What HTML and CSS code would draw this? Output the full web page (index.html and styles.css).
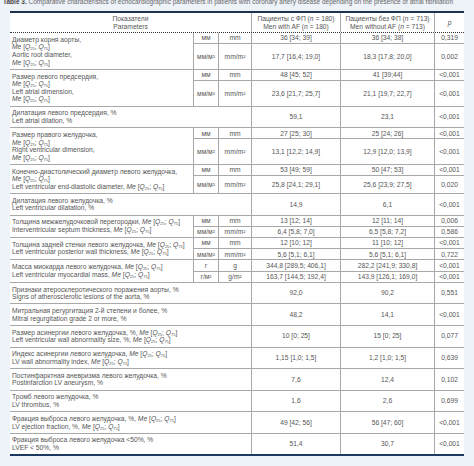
FILE: index.html
```html
<!DOCTYPE html>
<html lang="ru">
<head>
<meta charset="utf-8">
<title>Table 3</title>
<link rel="stylesheet" href="styles.css">
</head>
<body>
<div class="caption"><b>Table 3.</b> Comparative characteristics of echocardiographic parameters in patients with coronary artery disease depending on the presence of atrial fibrillation</div>
<div class="table">
  <div class="head">
    <div class="hp">Показатели<br>Parameters</div>
    <div class="c v1"><span>Пациенты с ФП (<i>n</i> = 180)<br>Men with AF (<i>n</i> = 180)</span></div>
    <div class="c v2"><span>Пациенты без ФП (<i>n</i> = 713)<br>Men without AF (<i>n</i> = 713)</span></div>
    <div class="c p"><i>p</i></div>
  </div>

  <div class="row">
    <div class="param">Диаметр корня аорты,<br><i>Me</i> [<i>Q</i><sub>25</sub>; <i>Q</i><sub>75</sub>]<br>Aortic root diameter,<br><i>Me</i> [<i>Q</i><sub>25</sub>; <i>Q</i><sub>75</sub>]</div>
    <div class="subs">
      <div class="sub"><div class="c u1">мм</div><div class="c u2">mm</div><div class="c v1">36 [34; 39]</div><div class="c v2">36 [34; 38]</div><div class="c p">0,319</div></div>
      <div class="sub"><div class="c u1">мм/м²</div><div class="c u2">mm/m²</div><div class="c v1">17,7 [16,4; 19,0]</div><div class="c v2">18,3 [17,8; 20,0]</div><div class="c p">0,002</div></div>
    </div>
  </div>

  <div class="row">
    <div class="param">Размер левого предсердия,<br><i>Me</i> [<i>Q</i><sub>25</sub>; <i>Q</i><sub>75</sub>]<br>Left atrial dimension,<br><i>Me</i> [<i>Q</i><sub>25</sub>; <i>Q</i><sub>75</sub>]</div>
    <div class="subs">
      <div class="sub"><div class="c u1">мм</div><div class="c u2">mm</div><div class="c v1">48 [45; 52]</div><div class="c v2">41 [39;44]</div><div class="c p">&lt;0,001</div></div>
      <div class="sub"><div class="c u1">мм/м²</div><div class="c u2">mm/m²</div><div class="c v1">23,6 [21,7; 25,7]</div><div class="c v2">21,1 [19,7; 22,7]</div><div class="c p">&lt;0,001</div></div>
    </div>
  </div>

  <div class="row">
    <div class="param wide">Дилатация левого предсердия, %<br>Left atrial dilation, %</div>
    <div class="c v1">59,1</div><div class="c v2">23,1</div><div class="c p">&lt;0,001</div>
  </div>

  <div class="row">
    <div class="param">Размер правого желудочка,<br><i>Me</i> [<i>Q</i><sub>25</sub>; <i>Q</i><sub>75</sub>]<br>Right ventricular dimension,<br><i>Me</i> [<i>Q</i><sub>25</sub>; <i>Q</i><sub>75</sub>]</div>
    <div class="subs">
      <div class="sub"><div class="c u1">мм</div><div class="c u2">mm</div><div class="c v1">27 [25; 30]</div><div class="c v2">25 [24; 26]</div><div class="c p">&lt;0,001</div></div>
      <div class="sub"><div class="c u1">мм/м²</div><div class="c u2">mm/m²</div><div class="c v1">13,1 [12,2; 14,9]</div><div class="c v2">12,9 [12,0; 13,9]</div><div class="c p">&lt;0,001</div></div>
    </div>
  </div>

  <div class="row">
    <div class="param">Конечно-диастолический диаметр левого желудочка,<br><i>Me</i> [<i>Q</i><sub>25</sub>; <i>Q</i><sub>75</sub>]<br>Left ventricular end-diastolic diameter, <i>Me</i> [<i>Q</i><sub>25</sub>; <i>Q</i><sub>75</sub>]</div>
    <div class="subs">
      <div class="sub"><div class="c u1">мм</div><div class="c u2">mm</div><div class="c v1">53 [49; 59]</div><div class="c v2">50 [47; 53]</div><div class="c p">&lt;0,001</div></div>
      <div class="sub"><div class="c u1">мм/м²</div><div class="c u2">mm/m²</div><div class="c v1">25,8 [24,1; 29,1]</div><div class="c v2">25,6 [23,9; 27,5]</div><div class="c p">0,020</div></div>
    </div>
  </div>

  <div class="row">
    <div class="param wide">Дилатация левого желудочка, %<br>Left ventricular dilatation, %</div>
    <div class="c v1">14,9</div><div class="c v2">6,1</div><div class="c p">&lt;0,001</div>
  </div>

  <div class="row">
    <div class="param">Толщина межжелудочковой перегородки, <i>Me</i> [<i>Q</i><sub>25</sub>; <i>Q</i><sub>75</sub>]<br>Interventricular septum thickness, <i>Me</i> [<i>Q</i><sub>25</sub>; <i>Q</i><sub>75</sub>]</div>
    <div class="subs">
      <div class="sub"><div class="c u1">мм</div><div class="c u2">mm</div><div class="c v1">13 [12; 14]</div><div class="c v2">12 [11; 14]</div><div class="c p">0,006</div></div>
      <div class="sub"><div class="c u1">мм/м²</div><div class="c u2">mm/m²</div><div class="c v1">6,4 [5,8; 7,0]</div><div class="c v2">6,5 [5,8; 7,2]</div><div class="c p">0,586</div></div>
    </div>
  </div>

  <div class="row">
    <div class="param">Толщина задней стенки левого желудочка, <i>Me</i> [<i>Q</i><sub>25</sub>; <i>Q</i><sub>75</sub>]<br>Left ventricular posterior wall thickness, <i>Me</i> [<i>Q</i><sub>25</sub>; <i>Q</i><sub>75</sub>]</div>
    <div class="subs">
      <div class="sub"><div class="c u1">мм</div><div class="c u2">mm</div><div class="c v1">12 [10; 12]</div><div class="c v2">11 [10; 12]</div><div class="c p">&lt;0,001</div></div>
      <div class="sub"><div class="c u1">мм/м²</div><div class="c u2">mm/m²</div><div class="c v1">5,6 [5,1; 6,1]</div><div class="c v2">5,6 [5,1; 6,1]</div><div class="c p">0,722</div></div>
    </div>
  </div>

  <div class="row">
    <div class="param">Масса миокарда левого желудочка, <i>Me</i> [<i>Q</i><sub>25</sub>; <i>Q</i><sub>75</sub>]<br>Left ventricular myocardial mass, <i>Me</i> [<i>Q</i><sub>25</sub>; <i>Q</i><sub>75</sub>]</div>
    <div class="subs">
      <div class="sub"><div class="c u1">г</div><div class="c u2">g</div><div class="c v1">344,8 [289,5; 406,1]</div><div class="c v2">282,2 [241,9; 330,8]</div><div class="c p">&lt;0,001</div></div>
      <div class="sub"><div class="c u1">г/м²</div><div class="c u2">g/m²</div><div class="c v1">163,7 [144,5; 192,4]</div><div class="c v2">143,9 [126,1; 169,0]</div><div class="c p">&lt;0,001</div></div>
    </div>
  </div>

  <div class="row">
    <div class="param wide">Признаки атеросклеротического поражения аорты, %<br>Signs of atherosclerotic lesions of the aorta, %</div>
    <div class="c v1">92,0</div><div class="c v2">90,2</div><div class="c p">0,551</div>
  </div>

  <div class="row">
    <div class="param wide">Митральная регургитация 2-й степени и более, %<br>Mitral regurgitation grade 2 or more, %</div>
    <div class="c v1">48,2</div><div class="c v2">14,1</div><div class="c p">&lt;0,001</div>
  </div>

  <div class="row">
    <div class="param wide">Размер асинергии левого желудочка, %, <i>Me</i> [<i>Q</i><sub>25</sub>; <i>Q</i><sub>75</sub>]<br>Left ventricular wall abnormality size, %, <i>Me</i> [<i>Q</i><sub>25</sub>; <i>Q</i><sub>75</sub>]</div>
    <div class="c v1">10 [0; 25]</div><div class="c v2">15 [0; 25]</div><div class="c p">0,077</div>
  </div>

  <div class="row">
    <div class="param wide">Индекс асинергии левого желудочка, <i>Me</i> [<i>Q</i><sub>25</sub>; <i>Q</i><sub>75</sub>]<br>LV wall abnormality index, <i>Me</i> [<i>Q</i><sub>25</sub>; <i>Q</i><sub>75</sub>]</div>
    <div class="c v1">1,15 [1,0; 1,5]</div><div class="c v2">1,2 [1,0; 1,5]</div><div class="c p">0,639</div>
  </div>

  <div class="row">
    <div class="param wide">Постинфарктная аневризма левого желудочка, %<br>Postinfarction LV aneurysm, %</div>
    <div class="c v1">7,6</div><div class="c v2">12,4</div><div class="c p">0,102</div>
  </div>

  <div class="row">
    <div class="param wide">Тромб левого желудочка, %<br>LV thrombus, %</div>
    <div class="c v1">1,6</div><div class="c v2">2,6</div><div class="c p">0,699</div>
  </div>

  <div class="row">
    <div class="param wide">Фракция выброса левого желудочка, %, <i>Me</i> [<i>Q</i><sub>25</sub>; <i>Q</i><sub>75</sub>]<br>LV ejection fraction, %, <i>Me</i> [<i>Q</i><sub>25</sub>; <i>Q</i><sub>75</sub>]</div>
    <div class="c v1">49 [42; 56]</div><div class="c v2">56 [47; 60]</div><div class="c p">&lt;0,001</div>
  </div>

  <div class="row">
    <div class="param wide">Фракция выброса левого желудочка &lt;50%, %<br>LVEF &lt; 50%, %</div>
    <div class="c v1">51,4</div><div class="c v2">30,7</div><div class="c p">&lt;0,001</div>
  </div>
</div>
</body>
</html>
```

FILE: styles.css
```css
html, body {
  margin: 0;
  padding: 0;
}
body {
  background: #eef3fa;
  font-family: "Liberation Sans", Arial, sans-serif;
  font-size: 6.7px;
  line-height: 7.6px;
  color: #555;
  width: 474px;
  height: 466px;
  overflow: hidden;
}
.caption {
  margin: -2px 0 0 3px;
  height: 13px;
  white-space: nowrap;
  overflow: hidden;
  font-size: 6.5px;
  line-height: 7px;
  color: #666;
}
.caption b {
  color: #444;
}
.table {
  margin-left: 10px;
  width: 454px;
  background: #fff;
  border-top: 2px solid #1f3350;
  border-bottom: 2px solid #1d3a5e;
}
.head {
  display: flex;
  border-bottom: 1px dotted #333;
}
.hp {
  box-sizing: border-box;
  width: 241px;
  padding: 2px 0;
  text-align: center;
}
.row {
  display: flex;
  border-top: 1px solid #a8a8a8;
}
.head + .row {
  border-top: none;
}
.param {
  box-sizing: border-box;
  width: 183px;
  padding: 2.7px 2px;
}
.param.wide {
  width: 241px;
}
.subs {
  display: flex;
  flex-direction: column;
  width: 271px;
}
.sub {
  display: flex;
}
.sub + .sub {
  flex: 1;
  border-top: 1px solid #a8a8a8;
}
.c {
  box-sizing: border-box;
  display: flex;
  align-items: center;
  justify-content: center;
  text-align: center;
  border-left: 1px solid #a8a8a8;
  padding: 1.3px 0;
  white-space: nowrap;
}
.u1 { width: 25px; }
.u2 { width: 33px; }
.v1 { width: 89px; }
.v2 { width: 94px; }
.p  { width: 30px; }
sub {
  font-size: 4px;
  line-height: 0;
  vertical-align: -1px;
}
```
